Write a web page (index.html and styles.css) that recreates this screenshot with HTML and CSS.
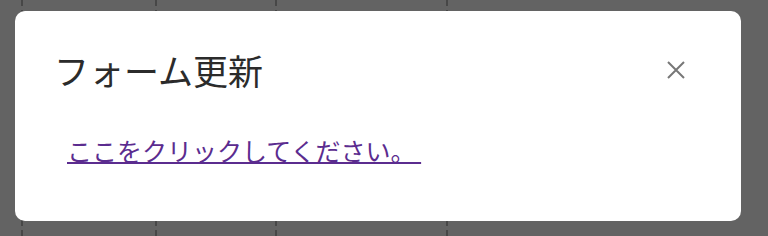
FILE: index.html
```html
<!DOCTYPE html>
<html lang="ja">
<head>
  <meta charset="UTF-8">
  <title>フォーム更新</title>
  <link rel="stylesheet" href="styles.css">
</head>
<body>

  <!-- ダイアログ -->
  <div class="modal">
    <div class="modal-header">
      <h2 class="modal-title">フォーム更新</h2>
      <button class="close-btn" aria-label="閉じる">
        <svg width="20" height="20" viewBox="0 0 20 20">
          <path d="M2 2 L18 18 M18 2 L2 18" stroke="#777" stroke-width="2" fill="none"/>
        </svg>
      </button>
    </div>

    <div class="modal-body">
      <a href="#" class="form-link">ここをクリックしてください。&nbsp;</a>
    </div>
  </div>

</body>
</html>
```

FILE: styles.css
```css
html, body {
  height: 100%;
}

body {
  margin: 0;
  padding: 11px 27px 15px 15px;
  box-sizing: border-box;
  font-family: "Noto Sans CJK JP", "Noto Sans", sans-serif;
  background-color: #636363;
  background-image:
    repeating-linear-gradient(to bottom, #474747 0 6px, transparent 6px 10px),
    repeating-linear-gradient(to bottom, #474747 0 6px, transparent 6px 10px),
    repeating-linear-gradient(to bottom, #474747 0 6px, transparent 6px 10px),
    repeating-linear-gradient(to bottom, #474747 0 6px, transparent 6px 10px);
  background-size: 2px 100%;
  background-position: 21px 0, 155px 0, 275px 0, 446px 0;
  background-repeat: no-repeat;
}

/* 白いダイアログ */
.modal {
  background-color: #fff;
  border-radius: 10px;
  height: 210px;
  box-sizing: border-box;
  padding: 0 45px 0 39px;
}

.modal-header {
  display: flex;
  align-items: center;
  justify-content: space-between;
  padding-top: 33px;
}

.modal-title {
  margin: 0;
  font-size: 35px;
  font-weight: 400;
  line-height: 52px;
  color: #2b2b2b;
}

.close-btn {
  background: none;
  border: none;
  padding: 0;
  margin-right: 10px;
  cursor: pointer;
  display: flex;
}

.modal-body {
  padding: 36px 0 0 13px;
}

.form-link {
  font-size: 25px;
  color: #5b2c8f;
  text-decoration: underline;
  text-decoration-thickness: 2px;
}
```
